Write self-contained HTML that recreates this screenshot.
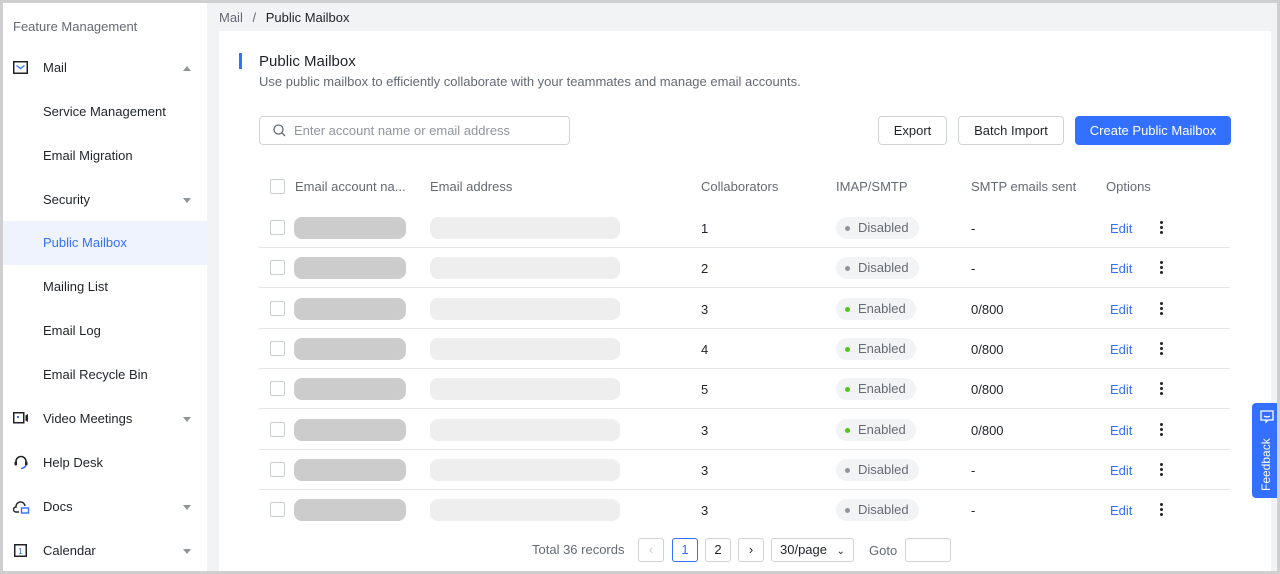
<!DOCTYPE html>
<html><head><meta charset="utf-8"><style>
*{box-sizing:border-box;margin:0;padding:0}
body{width:1280px;height:574px;overflow:hidden;background:#cfcfcf;font-family:"Liberation Sans",sans-serif;position:relative;color:#1f2329}
.frame{position:absolute;left:3px;top:3px;width:1274px;height:568px;background:#f2f3f5;overflow:hidden}
.side{position:absolute;left:0;top:0;width:204px;height:568px;background:#fff}
.ab{position:absolute}
.si{position:absolute;left:0;width:204px;height:44px;font-size:13px;line-height:44px;color:#1f2329}
.caret{position:absolute;left:180px;top:20px;width:0;height:0;border-left:4px solid transparent;border-right:4px solid transparent;border-top:5px solid #8f959e}
.caret.up{border-top:none;border-bottom:5px solid #8f959e}
.card{position:absolute;left:216px;top:28px;width:1052px;height:545px;background:#fff}
.t{position:absolute;font-size:13px}
.cb{position:absolute;width:15px;height:15px;border:1px solid #c9cdd4;border-radius:2px;background:#fff}
.p1{position:absolute;width:112px;height:22px;border-radius:8px;background:#cccccc}
.p2{position:absolute;width:190px;height:22px;border-radius:8px;background:#eeeeee}
.tag{position:absolute;height:22px;border-radius:11px;background:#f2f3f5;font-size:13px;line-height:22px;color:#646a73;padding:0 10px 0 22px}
.tag:before{content:"";position:absolute;left:9px;top:9px;width:5px;height:5px;border-radius:50%;background:#8f959e}
.tag.on:before{background:#52c41a}
.hr{position:absolute;left:256px;width:971px;height:1px;background:#e4e5e7}
.btn{position:absolute;top:113px;height:29px;border:1px solid #d0d3d6;border-radius:4px;background:#fff;font-size:13px;line-height:27px;text-align:center}
.dots{position:absolute;width:3px}
.dots i{display:block;width:3px;height:3px;background:#1f2329;border-radius:50%;margin-bottom:2px}
.pg{position:absolute;top:535px;height:24px;border:1px solid #d0d3d6;border-radius:3px;background:#fff;font-size:13px;line-height:22px;text-align:center}
</style></head><body>
<div class="frame">
<div class="side">
 <div class="t" style="left:10px;top:16px;color:#646a73">Feature Management</div>
 <svg class="ab" style="left:10px;top:58px" width="15" height="13" viewBox="0 0 15 13"><rect x="0.75" y="0.75" width="13.5" height="11.5" fill="none" stroke="#1f2329" stroke-width="1.5"/><path d="M3.5 4.5 L7.5 7.5 L11.5 4.5" fill="none" stroke="#3370ff" stroke-width="1.3"/></svg>
 <div class="si" style="top:43px;padding-left:40px">Mail<div class="caret up"></div></div>
 <div class="si" style="top:87px;padding-left:40px">Service Management</div>
 <div class="si" style="top:131px;padding-left:40px">Email Migration</div>
 <div class="si" style="top:175px;padding-left:40px">Security<div class="caret"></div></div>
 <div class="si" style="top:218px;padding-left:40px;background:#eef3fe;color:#3370ff">Public Mailbox</div>
 <div class="si" style="top:262px;padding-left:40px">Mailing List</div>
 <div class="si" style="top:306px;padding-left:40px">Email Log</div>
 <div class="si" style="top:350px;padding-left:40px">Email Recycle Bin</div>
 <svg class="ab" style="left:10px;top:409px" width="16" height="12" viewBox="0 0 16 12"><rect x="0.75" y="0.75" width="10" height="10" fill="none" stroke="#1f2329" stroke-width="1.5"/><rect x="4" y="4" width="2" height="2" fill="#3370ff"/><path d="M12.5 3.5 L15 2 V10 L12.5 8.5Z" fill="#1f2329"/></svg>
 <div class="si" style="top:394px;padding-left:40px">Video Meetings<div class="caret"></div></div>
 <svg class="ab" style="left:11px;top:452px" width="14" height="15" viewBox="0 0 14 15"><path d="M2 8 V6.5 A5 5 0 0 1 12 6.5 V8" fill="none" stroke="#1f2329" stroke-width="1.6"/><rect x="0.5" y="6.5" width="2.5" height="4" rx="1" fill="#1f2329"/><rect x="11" y="6.5" width="2.5" height="4" rx="1" fill="#1f2329"/><path d="M12 10 Q11 13 7 13.5" fill="none" stroke="#3370ff" stroke-width="1.6"/></svg>
 <div class="si" style="top:438px;padding-left:40px">Help Desk</div>
 <svg class="ab" style="left:10px;top:498px" width="17" height="13" viewBox="0 0 17 13"><path d="M6 11 H3 A2.5 2.5 0 0 1 3 6 A4.5 4.5 0 0 1 12 5" fill="none" stroke="#1f2329" stroke-width="1.4"/><rect x="8.5" y="7" width="7" height="5" fill="none" stroke="#3370ff" stroke-width="1.4"/></svg>
 <div class="si" style="top:482px;padding-left:40px">Docs<div class="caret"></div></div>
 <svg class="ab" style="left:11px;top:540px" width="13" height="14" viewBox="0 0 13 14"><rect x="0.75" y="1.75" width="11.5" height="11.5" fill="none" stroke="#1f2329" stroke-width="1.5"/><text x="4.3" y="11" font-size="8" fill="#3370ff" font-family="Liberation Sans">1</text></svg>
 <div class="si" style="top:526px;padding-left:40px">Calendar<div class="caret"></div></div>
</div>
<div class="t" style="left:216px;top:7px;color:#646a73">Mail <span style="margin:0 6px">/</span> <span style="color:#1f2329">Public Mailbox</span></div>
<div class="card"></div>
<div class="ab" style="left:236px;top:50px;width:3px;height:16px;background:#3370ff"></div>
<div class="t" style="left:256px;top:50px;font-size:15px">Public Mailbox</div>
<div class="t" style="left:256px;top:71px;color:#646a73">Use public mailbox to efficiently collaborate with your teammates and manage email accounts.</div>
<div class="ab" style="left:256px;top:113px;width:311px;height:29px;border:1px solid #d0d3d6;border-radius:4px"></div>
<svg class="ab" style="left:270px;top:121px" width="13" height="13" viewBox="0 0 13 13"><circle cx="5.5" cy="5.5" r="4.5" fill="none" stroke="#646a73" stroke-width="1.3"/><path d="M9 9 L12 12" stroke="#646a73" stroke-width="1.3"/></svg>
<div class="t" style="left:291px;top:120px;color:#8f959e">Enter account name or email address</div>
<div class="btn" style="left:875px;width:69px">Export</div>
<div class="btn" style="left:955px;width:106px">Batch Import</div>
<div class="btn" style="left:1072px;width:156px;background:#3370ff;border-color:#3370ff;color:#fff">Create Public Mailbox</div>
<div class="cb" style="left:267px;top:176px"></div>
<div class="t" style="left:292px;top:176px;color:#646a73">Email account na...</div>
<div class="t" style="left:427px;top:176px;color:#646a73">Email address</div>
<div class="t" style="left:698px;top:176px;color:#646a73">Collaborators</div>
<div class="t" style="left:833px;top:176px;color:#646a73">IMAP/SMTP</div>
<div class="t" style="left:968px;top:176px;color:#646a73">SMTP emails sent</div>
<div class="t" style="left:1103px;top:176px;color:#646a73">Options</div>
<div id="rows"></div>
<div class="t" style="left:529px;top:539px;color:#646a73">Total 36 records</div>
<div class="pg" style="left:635px;width:26px;color:#c9cdd4">&lsaquo;</div>
<div class="pg" style="left:669px;width:26px;border-color:#3370ff;color:#3370ff">1</div>
<div class="pg" style="left:702px;width:26px">2</div>
<div class="pg" style="left:735px;width:26px">&rsaquo;</div>
<div class="pg" style="left:768px;width:83px;text-align:left;padding-left:8px">30/page <span style="font-size:10px;margin-left:6px">&#8964;</span></div>
<div class="t" style="left:866px;top:540px;color:#646a73">Goto</div>
<div class="pg" style="left:902px;width:46px"></div>
<div class="ab" style="left:1249px;top:400px;width:28px;height:95px;background:#3370ff;border-radius:4px 0 0 4px"></div>
<svg class="ab" style="left:1257px;top:407px" width="14" height="14" viewBox="0 0 14 14"><path d="M1 1 H13 V10 H8 L6 12 V10 H1Z" fill="none" stroke="#fff" stroke-width="1.3"/><path d="M4 6 Q7 8 10 6" fill="none" stroke="#fff" stroke-width="1.2"/></svg>
<div class="ab" style="left:1256px;top:488px;transform:rotate(-90deg);transform-origin:0 0;color:#fff;font-size:12px">Feedback</div>
</div>
<script>
var d=[["1",0,"-"],["2",0,"-"],["3",1,"0/800"],["4",1,"0/800"],["5",1,"0/800"],["3",1,"0/800"],["3",0,"-"],["3",0,"-"]];
var h="";d.forEach(function(r,i){var c=225+i*40.3;var y=Math.round(c);
h+='<div class="cb" style="left:267px;top:'+(y-8)+'px"></div><div class="p1" style="left:291px;top:'+(y-11)+'px"></div><div class="p2" style="left:427px;top:'+(y-11)+'px"></div>';
h+='<div class="t" style="left:698px;top:'+(y-7)+'px">'+r[0]+'</div>';
h+='<div class="tag'+(r[1]?' on':'')+'" style="left:833px;top:'+(y-11)+'px">'+(r[1]?'Enabled':'Disabled')+'</div>';
h+='<div class="t" style="left:968px;top:'+(y-7)+'px">'+r[2]+'</div>';
h+='<div class="t" style="left:1107px;top:'+(y-7)+'px;color:#3370ff">Edit</div>';
h+='<div class="dots" style="left:1157px;top:'+(y-7)+'px"><i></i><i></i><i></i></div>';
if(i<7)h+='<div class="hr" style="top:'+Math.round(c+19)+'px"></div>';});
document.getElementById("rows").outerHTML=h;
</script>
</body></html>
